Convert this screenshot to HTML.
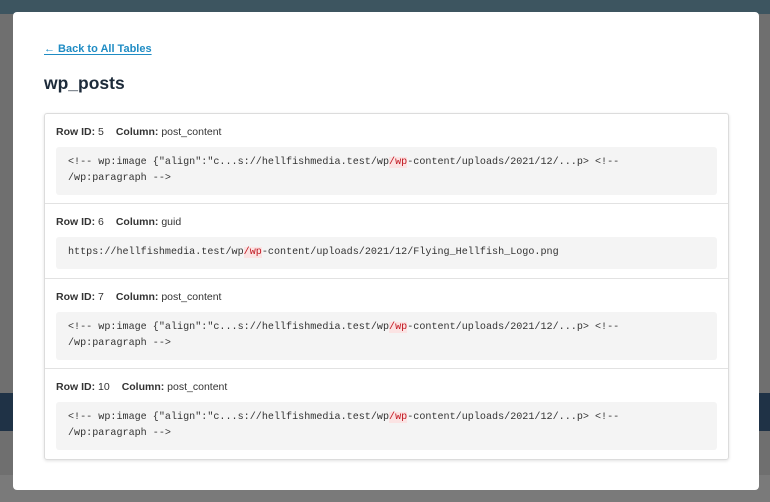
<!DOCTYPE html>
<html><head><style>
body{margin:0;width:770px;height:502px;background:#6f6f6f;position:relative;overflow:hidden;font-family:"Liberation Sans",sans-serif}
.top{position:absolute;left:0;top:0;width:770px;height:14px;background:#3d5560}
.band{position:absolute;left:0;top:393px;width:770px;height:38px;background:#1f3246}
.bot{position:absolute;left:0;top:475px;width:770px;height:27px;background:#7a7a7a}
.modal{position:absolute;left:13px;top:12px;width:746px;height:478px;background:#fff;border-radius:4px}
.back{position:absolute;left:31px;top:31px;font-size:11px;font-weight:bold;color:#1f8cc4;text-decoration:underline;text-underline-offset:2px}
h1{position:absolute;left:31px;top:61px;margin:0;font-size:17.5px;font-weight:bold;color:#1d2b3a}
.card{position:absolute;left:31px;top:101px;width:683px;border:1px solid #dcdcdc;border-radius:3px;box-shadow:0 1px 3px rgba(0,0,0,.12)}
.row{border-top:1px solid #e2e2e2;padding:12px 11px 11px 11px}
.row:first-child{border-top:none}
.lbl{font-size:10.5px;color:#333;height:13px;margin-bottom:8px}
.lbl span{margin-right:12px}
.code{background:#f4f4f4;border-radius:3px;padding:8px 12px;font-family:"Liberation Mono",monospace;font-size:10.1px;line-height:16px;color:#333;white-space:pre}
.h{color:#c0161f;background:#fbe3e3}
</style></head><body>
<div class="top"></div><div class="band"></div><div class="bot"></div>
<div class="modal">
<div class="back">← Back to All Tables</div>
<h1>wp_posts</h1>
<div class="card">
<div class="row" style="height:66px"><div class="lbl"><b>Row ID:</b> <span>5</span><b>Column:</b> post_content</div>
<div class="code">&lt;!-- wp:image {"align":"c...s://hellfishmedia.test/wp<span class="h">/wp</span>-content/uploads/2021/12/...p&gt; &lt;!--
/wp:paragraph --&gt;</div></div>
<div class="row" style="height:51px"><div class="lbl"><b>Row ID:</b> <span>6</span><b>Column:</b> guid</div>
<div class="code">https://hellfishmedia.test/wp<span class="h">/wp</span>-content/uploads/2021/12/Flying_Hellfish_Logo.png</div></div>
<div class="row" style="height:66px"><div class="lbl"><b>Row ID:</b> <span>7</span><b>Column:</b> post_content</div>
<div class="code">&lt;!-- wp:image {"align":"c...s://hellfishmedia.test/wp<span class="h">/wp</span>-content/uploads/2021/12/...p&gt; &lt;!--
/wp:paragraph --&gt;</div></div>
<div class="row" style="height:67px"><div class="lbl"><b>Row ID:</b> <span>10</span><b>Column:</b> post_content</div>
<div class="code">&lt;!-- wp:image {"align":"c...s://hellfishmedia.test/wp<span class="h">/wp</span>-content/uploads/2021/12/...p&gt; &lt;!--
/wp:paragraph --&gt;</div></div>
</div>
</div>
</body></html>
